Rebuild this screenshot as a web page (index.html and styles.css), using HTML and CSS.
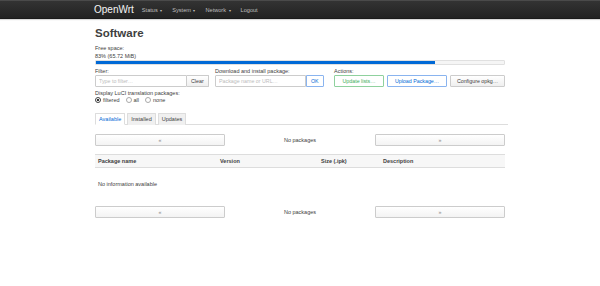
FILE: index.html
```html
<!DOCTYPE html>
<html lang="en">
<head>
  <meta charset="UTF-8" />
  <title>Software - OpenWrt</title>
  <link rel="stylesheet" href="styles.css">
</head>
<body>
  <!-- Top bar -->
  <header class="topbar">
    <div class="wrap topbar-inner">
      <a class="brand" href="#">OpenWrt</a>
      <ul class="nav">
        <li>Status <span class="caret">▾</span></li>
        <li>System <span class="caret">▾</span></li>
        <li>Network <span class="caret">▾</span></li>
        <li>Logout</li>
      </ul>
    </div>
  </header>

  <div class="wrap main">
    <h2>Software</h2>

    <div class="space">
      <div class="label">Free space:</div>
      <div class="label">83% (65.72 MiB)</div>
      <div class="meter"><div class="meter-fill" style="width: 83%"></div></div>
    </div>

    <div class="controls">
      <div class="ctl ctl-filter">
        <div class="label">Filter:</div>
        <div class="group">
          <input type="text" placeholder="Type to filter…">
          <button class="btn">Clear</button>
        </div>
      </div>
      <div class="ctl ctl-dl">
        <div class="label">Download and install package:</div>
        <div class="group">
          <input type="text" placeholder="Package name or URL…">
          <button class="btn btn-blue">OK</button>
        </div>
      </div>
      <div class="ctl ctl-actions">
        <div class="label">Actions:</div>
        <div class="actions">
          <button class="btn btn-green">Update lists…</button>
          <button class="btn btn-blue">Upload Package…</button>
          <button class="btn">Configure opkg…</button>
        </div>
      </div>
    </div>

    <div class="lang">
      <div class="label">Display LuCI translation packages:</div>
      <div class="radios">
        <label><span class="radio on"></span>filtered</label>
        <label><span class="radio"></span>all</label>
        <label><span class="radio"></span>none</label>
      </div>
    </div>

    <ul class="tabs">
      <li class="active">Available</li>
      <li>Installed</li>
      <li>Updates</li>
    </ul>

    <div class="pager">
      <button class="btn pg">«</button>
      <div class="pg-text">No packages</div>
      <button class="btn pg">»</button>
    </div>

    <div class="table">
      <div class="tr th">
        <div class="c1">Package name</div>
        <div class="c2">Version</div>
        <div class="c3">Size (.ipk)</div>
        <div class="c4">Description</div>
      </div>
      <div class="tr empty">No information available</div>
    </div>

    <div class="pager">
      <button class="btn pg">«</button>
      <div class="pg-text">No packages</div>
      <button class="btn pg">»</button>
    </div>
  </div>
</body>
</html>
```

FILE: styles.css
```css
body {
  margin: 0;
  font-family: "Liberation Sans", Arial, sans-serif;
  font-size: 5.5px;
  color: #404040;
  background: #fff;
}

.wrap {
  width: 410px;
  margin: 0 auto;
}

/* top bar */
.topbar {
  height: 17px;
  background: linear-gradient(#333, #222);
  border-top: 1px solid #4a4a4a;
  border-bottom: 1px solid #1a1a1a;
  box-shadow: 0 1px 1px rgba(0, 0, 0, 0.15);
}

.topbar-inner {
  display: flex;
  align-items: center;
  height: 17px;
}

.brand {
  margin-left: -1px;
  color: #f5f5f5;
  font-size: 10px;
  text-decoration: none;
}

.nav {
  display: flex;
  list-style: none;
  margin: 0 0 0 8px;
  padding: 0;
  gap: 10px;
  color: #bfbfbf;
  font-size: 5.6px;
}

.caret {
  font-size: 4px;
  margin-left: 1px;
}

/* page */
h2 {
  margin: 8px 0 5px;
  font-size: 11.5px;
  font-weight: bold;
  color: #404040;
}

.label {
  line-height: 8px;
}

.meter {
  height: 3px;
  border: 1px solid #e0e0e0;
  border-radius: 1px;
  background: #f5f5f5;
  width: 408px;
}

.meter-fill {
  height: 100%;
  background: #0069d6;
}

.controls {
  display: flex;
  margin-top: 3px;
}

.controls .label {
  line-height: 7px;
}

.ctl-filter {
  width: 120px;
}

.ctl-dl {
  width: 119px;
}

.group {
  display: flex;
}

input {
  box-sizing: border-box;
  height: 12px;
  padding: 0 3px;
  border: 1px solid #ccc;
  border-radius: 1px 0 0 1px;
  font: inherit;
  font-size: 5.3px;
  color: #404040;
}

input::placeholder {
  color: #bbb;
}

.ctl-filter input {
  width: 92px;
}

.ctl-dl input {
  width: 91px;
}

.btn {
  box-sizing: border-box;
  height: 12px;
  padding: 0 4px;
  border: 1px solid #ccc;
  border-radius: 1px;
  background: linear-gradient(#fff, #efefef);
  font: inherit;
  font-size: 5.3px;
  color: #404040;
}

.group .btn {
  border-left: none;
  border-radius: 0 1px 1px 0;
}

.btn-green {
  border-color: #8fd19e;
  color: #3cae5a;
  background: #fff;
}

.btn-blue {
  border-color: #8ab4ef;
  color: #0069d6;
  background: #fff;
}

.group .btn-blue {
  border-left: 1px solid #8ab4ef;
}

.actions {
  display: flex;
  gap: 3px;
}

.actions .btn:nth-child(1) {
  width: 50px;
}

.actions .btn:nth-child(2) {
  width: 60px;
}

.actions .btn:nth-child(3) {
  width: 55px;
}

.lang {
  margin-top: 2px;
}

.radios {
  display: flex;
  gap: 6px;
}

.radios label {
  display: flex;
  align-items: center;
  gap: 2px;
}

.radio {
  box-sizing: border-box;
  width: 6px;
  height: 6px;
  border: 1px solid #aaa;
  border-radius: 50%;
  background: #fff;
}

.radio.on {
  border-color: #444;
  background: radial-gradient(circle, #333 40%, #fff 55%);
}

/* tabs */
.tabs {
  display: flex;
  list-style: none;
  margin: 10px 0 0;
  padding: 0;
  gap: 2px;
  border-bottom: 1px solid #ddd;
  width: 413px;
}

.tabs li {
  padding: 2px 3px;
  line-height: 6px;
  border: 1px solid #ddd;
  border-bottom: none;
  border-radius: 1px 1px 0 0;
  background: #f0f0f0;
  margin-bottom: -1px;
}

.tabs li.active {
  background: #fff;
  color: #0069d6;
  border-bottom: 1px solid #fff;
}

/* pager */
.pager {
  display: flex;
  align-items: center;
  margin-top: 9px;
}

.pg {
  width: 130px;
  height: 12px;
  color: #888;
  background: linear-gradient(#fff, #f3f3f3);
}

.pg-text {
  flex: 1;
  text-align: center;
}

/* table */
.table {
  margin-top: 8px;
  width: 410px;
}

.tr {
  display: flex;
  border-top: 1px solid #ddd;
}

.th {
  height: 12px;
  align-items: center;
  background: #f7f7f7;
  font-weight: bold;
  border-bottom: 1px solid #ddd;
}

.th div {
  box-sizing: border-box;
  padding-left: 3px;
}

.c1 {
  width: 122px;
}

.c2 {
  width: 101px;
}

.c3 {
  width: 62px;
}

.c4 {
  flex: 1;
}

.empty {
  border-top: none;
  padding: 13px 3px 0;
  height: 16px;
}
```
